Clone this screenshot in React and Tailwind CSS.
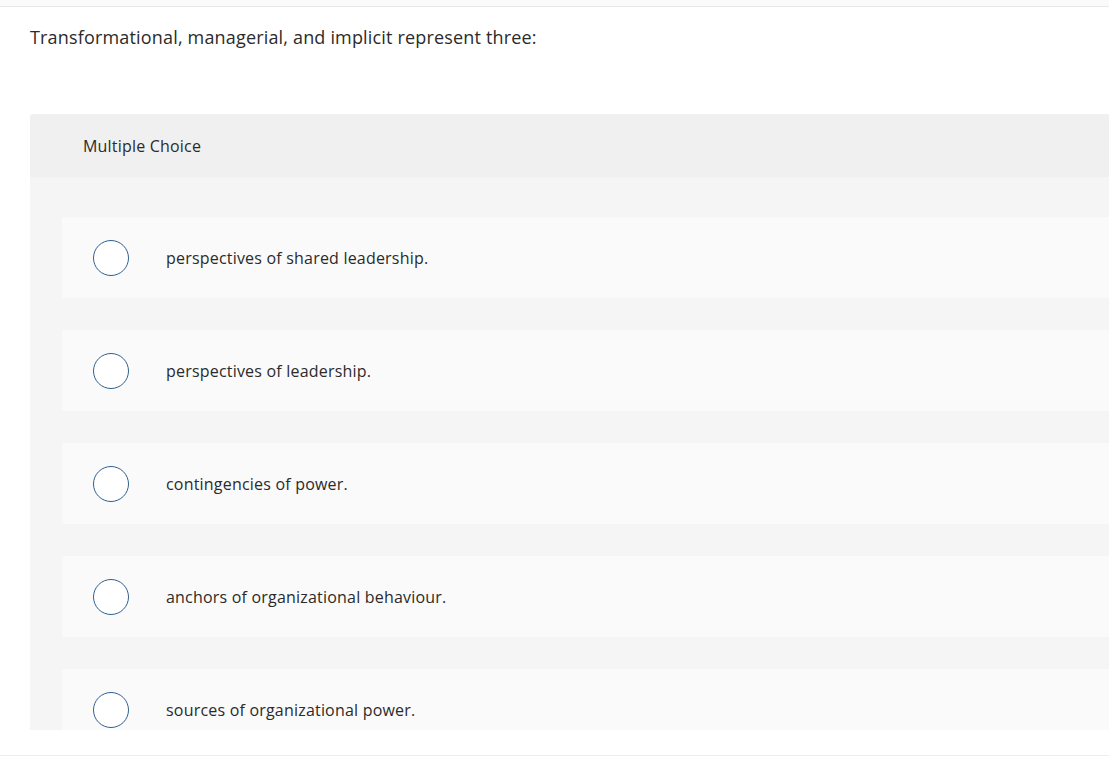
export default function App() {
  const options = [
    "perspectives of shared leadership.",
    "perspectives of leadership.",
    "contingencies of power.",
    "anchors of organizational behaviour.",
    "sources of organizational power.",
  ];
  return (
    <div
      className="w-[1109px] h-[765px] overflow-hidden bg-white text-[#2b2b2b]"
      style={{ fontFamily: '"Open Sans", "Lato", sans-serif' }}
    >
      <div className="h-[7px] bg-[#fafafa] border-b border-[#e8e8e8]" />
      <div className="pl-[30px] pt-[17px] h-[107px]">
        <p className="text-[18px] leading-[27px] tracking-[0.17px] text-[#2b2b2b]">
          Transformational, managerial, and implicit represent three:
        </p>
      </div>
      <div className="ml-[30px] w-[1100px]">
        <div className="h-[63px] bg-[#f0f0f0] rounded-tl-[3px] flex items-center pl-[53px] text-[16px] tracking-[0.2px] text-[#2b2b2b]">
          Multiple Choice
        </div>
        <div className="h-[553px] bg-[#f5f5f5] pl-[32px] pt-[40px] overflow-hidden flex flex-col gap-[32px]">
          {options.map((o) => (
            <div
              key={o}
              className="shrink-0 h-[81px] bg-[#fafafa] rounded-[3px] flex items-center"
            >
              <div className="ml-[31px] w-[36px] h-[36px] rounded-full border-[1.5px] border-[#2f5f91] bg-white shrink-0" />
              <span className="ml-[37px] text-[16px] tracking-[0.2px] text-[#2b2b2b]">{o}</span>
            </div>
          ))}
        </div>
      </div>
      <div className="h-[25px]" />
      <div className="border-t border-[#eeeeee]" />
    </div>
  );
}
